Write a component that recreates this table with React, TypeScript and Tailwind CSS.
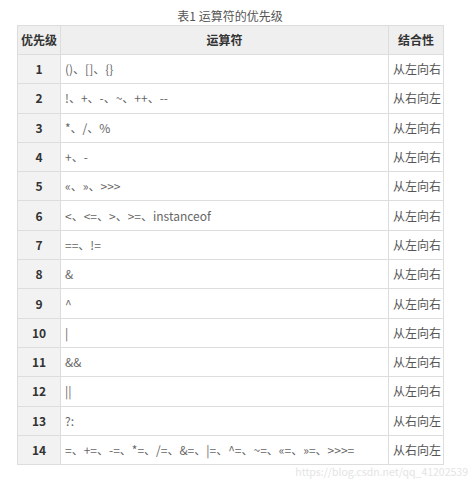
import React from "react";

const rows: [string, string, string][] = [
  ["1", "()、[]、{}", "从左向右"],
  ["2", "!、+、-、~、++、--", "从右向左"],
  ["3", "*、/、%", "从左向右"],
  ["4", "+、-", "从左向右"],
  ["5", "«、»、>>>", "从左向右"],
  ["6", "<、<=、>、>=、instanceof", "从左向右"],
  ["7", "==、!=", "从左向右"],
  ["8", "&", "从左向右"],
  ["9", "^", "从左向右"],
  ["10", "|", "从左向右"],
  ["11", "&&", "从左向右"],
  ["12", "||", "从左向右"],
  ["13", "?:", "从右向左"],
  ["14", "=、+=、-=、*=、/=、&=、|=、^=、~=、«=、»=、>>>=", "从右向左"],
];

const App = () => {
  return (
    <div
      className="w-[474px] h-[484px] bg-white text-[12px] text-[#444] antialiased"
      style={{ fontFamily: '"Noto Sans CJK SC", "Noto Sans", sans-serif' }}
    >
      <div className="ml-[17px] w-[426px]">
        <div className="pt-[8px] h-[25px] text-center leading-[16px] text-[#555]">
          表1 运算符的优先级
        </div>
        <table className="w-[426px] border-collapse table-fixed">
          <colgroup>
            <col className="w-[43px]" />
            <col className="w-[328px]" />
            <col className="w-[55px]" />
          </colgroup>
          <thead>
            <tr className="h-[29px] bg-[#efefef]">
              <th className="border border-[#dddddd] font-bold text-[#333] text-center p-0">
                优先级
              </th>
              <th className="border border-[#dddddd] font-bold text-[#333] text-center p-0">
                运算符
              </th>
              <th className="border border-[#dddddd] font-bold text-[#333] text-center p-0">
                结合性
              </th>
            </tr>
          </thead>
          <tbody>
            {rows.map(([n, op, dir]) => (
              <tr key={n} className="h-[29.3px]">
                <td className="border border-[#dddddd] bg-[#f2f2f2] text-center font-bold text-[#333] p-0">
                  {n}
                </td>
                <td className="border border-[#dddddd] pl-[4px] text-[#666] whitespace-nowrap">
                  {op}
                </td>
                <td className="border border-[#dddddd] pl-[4px] text-[#555] whitespace-nowrap">
                  {dir}
                </td>
              </tr>
            ))}
          </tbody>
        </table>
      </div>
      <div className="pr-[6px] pt-[1px] text-right text-[10.5px] leading-[12px] text-[#e4e4e4]">
        https://blog.csdn.net/qq_41202539
      </div>
    </div>
  );
};

export default App;
